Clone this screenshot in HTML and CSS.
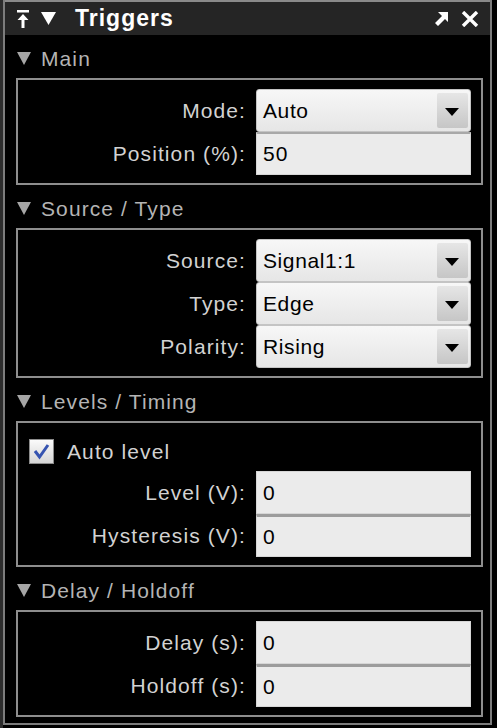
FILE: index.html
```html
<!DOCTYPE html>
<html lang="en">
<head>
  <meta charset="UTF-8">
  <title>Triggers</title>
  <link rel="stylesheet" href="styles.css">
</head>
<body>
  <div class="window">
    <!-- Title bar -->
    <div class="titlebar">
      <svg class="pin" width="14" height="20" viewBox="0 0 14 20">
        <rect x="1" y="1" width="12" height="2.5" fill="#fff"/>
        <polygon points="7,5 1.5,11 5.5,11 5.5,19 8.5,19 8.5,11 12.5,11" fill="#fff"/>
      </svg>
      <svg class="tri" width="15" height="13" viewBox="0 0 15 13">
        <polygon points="0,0 15,0 7.5,13" fill="#fff"/>
      </svg>
      <span class="title">Triggers</span>
      <span class="spacer"></span>
      <svg class="undock" width="15" height="17" viewBox="0 0 15 17">
        <polygon points="4,2 14,2 14,12 11,9 4,16 1,13 8,6" fill="#fff"/>
      </svg>
      <svg class="close" width="18" height="16" viewBox="0 0 18 16">
        <path d="M2 1 L16 15 M16 1 L2 15" stroke="#fff" stroke-width="3.4"/>
      </svg>
    </div>

    <div class="content">
      <div class="section-head"><span class="caret"></span>Main</div>
      <div class="group">
        <div class="form">
          <label>Mode:</label>
          <div class="combo">Auto<span class="drop"></span></div>
          <label>Position (%):</label>
          <div class="field under-combo">50</div>
        </div>
      </div>

      <div class="section-head"><span class="caret"></span>Source / Type</div>
      <div class="group">
        <div class="form">
          <label>Source:</label>
          <div class="combo">Signal1:1<span class="drop"></span></div>
          <label>Type:</label>
          <div class="combo">Edge<span class="drop"></span></div>
          <label>Polarity:</label>
          <div class="combo">Rising<span class="drop"></span></div>
        </div>
      </div>

      <div class="section-head"><span class="caret"></span>Levels / Timing</div>
      <div class="group">
        <div class="check-row">
          <span class="checkbox">
            <svg width="19" height="19" viewBox="0 0 19 19">
              <path d="M3 9 L7.5 15 L16 3" fill="none" stroke="#3553b0" stroke-width="3"/>
            </svg>
          </span>
          Auto level
        </div>
        <div class="form">
          <label>Level (V):</label>
          <div class="field">0</div>
          <label>Hysteresis (V):</label>
          <div class="field next">0</div>
        </div>
      </div>

      <div class="section-head"><span class="caret"></span>Delay / Holdoff</div>
      <div class="group">
        <div class="form">
          <label>Delay (s):</label>
          <div class="field">0</div>
          <label>Holdoff (s):</label>
          <div class="field next">0</div>
        </div>
      </div>
    </div>
  </div>
</body>
</html>
```

FILE: styles.css
```css
html, body {
  margin: 0;
  padding: 0;
  height: 100%;
  overflow: hidden;
}

body {
  background: linear-gradient(to right, #2c2c2c 3px, #000 3px);
  font-family: "Liberation Sans", Arial, sans-serif;
  font-size: 21px;
  letter-spacing: 1.1px;
}

/* outer panel */
.window {
  width: 485px;
  margin-left: 3px;
  height: 723px;
  border-left: 2px solid #7c7c7c;
  border-right: 2px solid #7c7c7c;
  border-bottom: 2px solid #7c7c7c;
  background: #000;
  display: flex;
  flex-direction: column;
}

.titlebar {
  height: 33px;
  border-top: 2px solid #8a8a8a;
  background: #252525;
  display: flex;
  align-items: center;
  padding-left: 11px;
  padding-right: 11px;
}

.titlebar .tri {
  margin-left: 11px;
}

.title {
  margin-left: 19px;
  color: #fff;
  font-weight: bold;
  font-size: 23px;
  letter-spacing: 1px;
}

.spacer {
  flex: 1;
}

.titlebar .close {
  margin-left: 12px;
}

/* body of the panel */
.content {
  padding: 0 7px 0 11px;
}

.section-head {
  height: 39px;
  padding-top: 4px;
  display: flex;
  align-items: center;
  color: #b4b4b4;
  padding-left: 1px;
}

.caret {
  width: 0;
  height: 0;
  border-left: 7px solid transparent;
  border-right: 7px solid transparent;
  border-top: 13px solid #a6a6a6;
  margin-right: 10px;
}

.group {
  border: 2px solid #8e8e8e;
  padding: 9px 10px 8px 10px;
}

.form {
  display: grid;
  grid-template-columns: 1fr 215px;
  grid-auto-rows: 43px;
  column-gap: 10px;
}

.form label {
  color: #d2d2d2;
  text-align: right;
  align-self: center;
}

.combo {
  position: relative;
  display: flex;
  align-items: center;
  padding-left: 6px;
  background: linear-gradient(#f7f7f7, #e6e6e6);
  border: 1px solid #c4c4c4;
  border-radius: 3px;
  color: #000;
  letter-spacing: 0.6px;
  box-sizing: border-box;
}

.drop {
  position: absolute;
  right: 2px;
  top: 3px;
  bottom: 3px;
  width: 31px;
  background: linear-gradient(#e6e6e6, #c6c6c6);
  border-radius: 2px;
}

.drop::after {
  content: "";
  position: absolute;
  left: 8px;
  top: 50%;
  margin-top: -3px;
  border-left: 7px solid transparent;
  border-right: 7px solid transparent;
  border-top: 8px solid #000;
}

.field {
  display: flex;
  align-items: center;
  padding-left: 6px;
  background: #ebebeb;
  border: 1px solid #d6d6d6;
  color: #000;
  box-sizing: border-box;
}

.field.next {
  border-top: 3px solid #9c9c9c;
}

.field.under-combo {
  border-top: 2px solid #a8a8a8;
}

.check-row {
  height: 39px;
  display: flex;
  align-items: center;
  color: #d2d2d2;
  padding-left: 1px;
}

.checkbox {
  width: 23px;
  height: 23px;
  margin-right: 13px;
  background: linear-gradient(#fafafa, #d6d6d6);
  border: 1px solid #8c8c8c;
  display: flex;
  align-items: center;
  justify-content: center;
}
```
